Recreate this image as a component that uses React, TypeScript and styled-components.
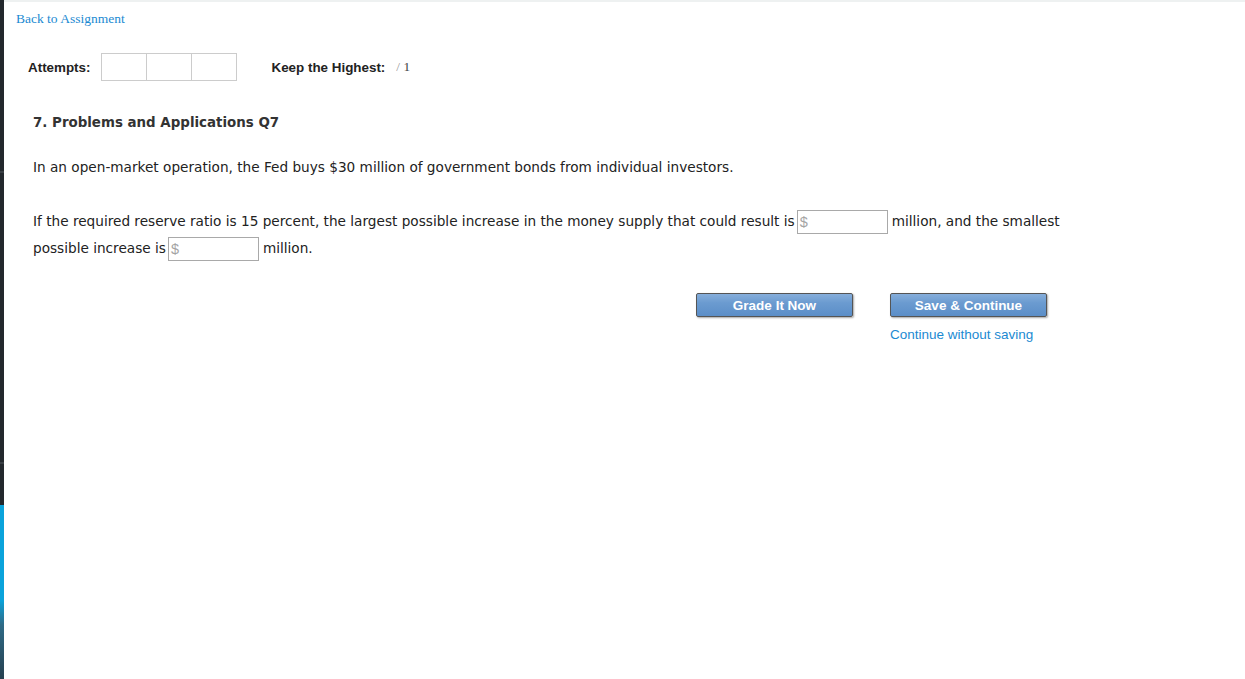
import React from "react";
import styled, { createGlobalStyle } from "styled-components";

const Global = createGlobalStyle`
  html, body { margin: 0; padding: 0; background: #fff; }
  body { width: 1245px; height: 679px; overflow: hidden; }
`;

const Frame = styled.div`
  display: flex;
  width: 1245px;
  height: 679px;
`;

const SideStrip = styled.div`
  width: 4px;
  flex: none;
  background: linear-gradient(
    to bottom,
    #23282d 0px,
    #23282d 171px,
    #3a3f44 171px,
    #3a3f44 173px,
    #23282d 173px,
    #23282d 462px,
    #3a3f44 462px,
    #3a3f44 464px,
    #23282d 464px,
    #23282d 505px,
    #0aa3db 505px,
    #0aa3db 600px,
    #2f6a86 625px,
    #26404f 679px
  );
`;

const Main = styled.div`
  flex: 1;
  display: flex;
  flex-direction: column;
  border-top: 2px solid #eef1f1;
`;

const BackLink = styled.a`
  font-family: "Liberation Serif", serif;
  font-size: 13.5px;
  color: #1b8ad2;
  text-decoration: none;
  margin: 8px 0 0 12px;
  line-height: 17px;
  align-self: flex-start;
`;

const AttemptsRow = styled.div`
  display: flex;
  align-items: center;
  margin: 26px 0 0 24px;
  font-family: "Liberation Sans", Arial, sans-serif;
  font-size: 13.4px;
  font-weight: bold;
  color: #222;
`;

const Boxes = styled.div`
  display: flex;
  margin-left: 10px;
  margin-right: 35px;
`;

const Box = styled.div`
  width: 44px;
  height: 26px;
  border: 1px solid #cccccc;
  & + & { border-left: none; }
`;

const Score = styled.span`
  font-family: "Liberation Serif", serif;
  font-weight: normal;
  color: #444;
  margin-left: 11px;
  & > span { color: #999; }
`;

const Content = styled.div`
  margin-left: 29px;
  font-family: "DejaVu Sans", Verdana, sans-serif;
  font-size: 13.65px;
  color: #222;
`;

const Heading = styled.h2`
  margin: 32px 0 0 0;
  font-size: 13.4px;
  font-weight: bold;
  line-height: 20px;
  color: #333;
`;

const Para = styled.p<{ $top: number }>`
  margin: ${(p) => p.$top}px 0 0 0;
  line-height: 27px;
  width: 1060px;
`;

const Answer = styled.span`
  display: inline-block;
  width: 87px;
  height: 22px;
  border: 1px solid #a9a9a9;
  vertical-align: middle;
  margin: 0 4px 0 2px;
  font-family: "Liberation Sans", Arial, sans-serif;
  font-size: 14.5px;
  color: #a4a4a4;
  line-height: 22px;
  padding-left: 2px;
  box-sizing: content-box;
`;

const Actions = styled.div`
  display: flex;
  margin: 31px 0 0 692px;
  gap: 37px;
`;

const Col = styled.div`
  display: flex;
  flex-direction: column;
  align-items: flex-start;
`;

const Button = styled.button`
  width: 157px;
  height: 24px;
  border: 1px solid #555;
  border-radius: 2px;
  background: linear-gradient(to bottom, #86aedb 0%, #6b9bd0 40%, #5b8ec8 100%);
  box-shadow: 1px 1px 2px rgba(0, 0, 0, 0.35);
  color: #fff;
  font-family: "Liberation Sans", Arial, sans-serif;
  font-size: 13.5px;
  font-weight: bold;
  padding: 0;
  cursor: pointer;
`;

const Link = styled.a`
  margin-top: 10px;
  font-family: "Liberation Sans", Arial, sans-serif;
  font-size: 13.5px;
  color: #1b8ad2;
  text-decoration: none;
`;

export default function App() {
  return (
    <>
      <Global />
      <Frame>
        <SideStrip />
        <Main>
          <BackLink href="#">Back to Assignment</BackLink>
          <AttemptsRow>
            Attempts:
            <Boxes>
              <Box />
              <Box />
              <Box />
            </Boxes>
            Keep the Highest:
            <Score>
              <span>/</span> 1
            </Score>
          </AttemptsRow>
          <Content>
            <Heading>7. Problems and Applications Q7</Heading>
            <Para $top={21}>
              In an open-market operation, the Fed buys $30 million of government bonds from individual investors.
            </Para>
            <Para $top={27}>
              If the required reserve ratio is 15 percent, the largest possible increase in the money supply that could result is
              <Answer>$</Answer>
              million, and the smallest possible increase is<Answer>$</Answer>
              million.
            </Para>
          </Content>
          <Actions>
            <Button>Grade It Now</Button>
            <Col>
              <Button>Save &amp; Continue</Button>
              <Link href="#">Continue without saving</Link>
            </Col>
          </Actions>
        </Main>
      </Frame>
    </>
  );
}
